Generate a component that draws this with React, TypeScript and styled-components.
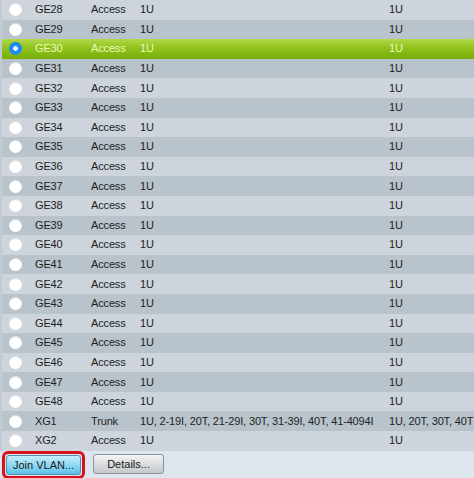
import React from "react";
import styled, { createGlobalStyle } from "styled-components";

const GlobalStyle = createGlobalStyle`
    html, body {
        margin: 0;
        padding: 0;
        background: #dce6ec;
        overflow: hidden;
    }
    body {
        font-family: "Liberation Sans", Arial, Helvetica, sans-serif;
    }
`;

const Page = styled.div`
    width: 474px;
    height: 478px;
    display: flex;
    flex-direction: column;
    background: #dce6ec;
`;

const Table = styled.div`
    display: flex;
    flex-direction: column;
    border-left: 2px solid #c2cad2;
`;

const Row = styled.div<{ $dark: boolean; $selected: boolean }>`
    display: grid;
    grid-template-columns: 28px 56px 49px 250px 1fr;
    align-items: center;
    height: 19.6px;
    background: ${({ $dark, $selected }) =>
        $selected
            ? "linear-gradient(#b0d94a, #8fc21c 45%, #78ae08)"
            : $dark
            ? "#b8c3cc"
            : "#cdd4db"};
    color: ${({ $selected }) => ($selected ? "#eef9b8" : "#1e1e1e")};
`;

const Cell = styled.div<{ $tight?: boolean }>`
    padding-left: ${({ $tight }) => ($tight ? "4px" : "5px")};
    font-size: 11px;
    letter-spacing: -0.15px;
    white-space: nowrap;
    overflow: hidden;
    line-height: 19px;
`;

const RadioCell = styled.div`
    padding-left: 7px;
    display: flex;
    align-items: center;
`;

const Radio = styled.span<{ $checked: boolean }>`
    display: block;
    width: 13px;
    height: 13px;
    border-radius: 50%;
    background: ${({ $checked }) =>
        $checked ? "radial-gradient(#ffffff 0 2px, #1e8ef2 2.5px)" : "#ffffff"};
    box-shadow: inset 0 1px 1px rgba(0, 0, 0, 0.12);
`;

const ButtonBar = styled.div`
    display: flex;
    align-items: center;
    gap: 8px;
    padding-left: 2px;
    height: 27px;
`;

const Highlight = styled.div`
    border: 3px solid #d7121d;
    border-radius: 6px;
    padding: 1px;
    height: 20px;
    margin-top: 2px;
`;

const Button = styled.button<{ $primary?: boolean }>`
    height: 20px;
    padding: 0 ${({ $primary }) => ($primary ? "6px" : "13px")};
    font-family: "Liberation Sans", Arial, sans-serif;
    font-size: 11px;
    color: #1a1a1a;
    border-radius: 3px;
    border: 1px solid ${({ $primary }) => ($primary ? "#4f90ad" : "#8b9298")};
    background: ${({ $primary }) =>
        $primary
            ? "linear-gradient(#c6eefa, #8fd8f2 50%, #5cc4e9)"
            : "linear-gradient(#f4f4f4, #dadcde 50%, #c5c8cb)"};
    cursor: pointer;
`;

const ports = [
    ...Array.from({ length: 21 }, (_, i) => ({
        name: `GE${28 + i}`,
        mode: "Access",
        admin: "1U",
        oper: "1U",
    })),
    {
        name: "XG1",
        mode: "Trunk",
        admin: "1U, 2-19I, 20T, 21-29I, 30T, 31-39I, 40T, 41-4094I",
        oper: "1U, 20T, 30T, 40T",
    },
    { name: "XG2", mode: "Access", admin: "1U", oper: "1U" },
];

const App = () => {
    return (
        <Page>
            <GlobalStyle />
            <Table>
                {ports.map((p, i) => {
                    const selected = p.name === "GE30";
                    return (
                        <Row key={p.name} $dark={i % 2 === 1} $selected={selected}>
                            <RadioCell>
                                <Radio $checked={selected} />
                            </RadioCell>
                            <Cell>{p.name}</Cell>
                            <Cell>{p.mode}</Cell>
                            <Cell>{p.admin}</Cell>
                            <Cell $tight>{p.oper}</Cell>
                        </Row>
                    );
                })}
            </Table>
            <ButtonBar>
                <Highlight>
                    <Button $primary>Join VLAN...</Button>
                </Highlight>
                <Button>Details...</Button>
            </ButtonBar>
        </Page>
    );
};

export default App;
